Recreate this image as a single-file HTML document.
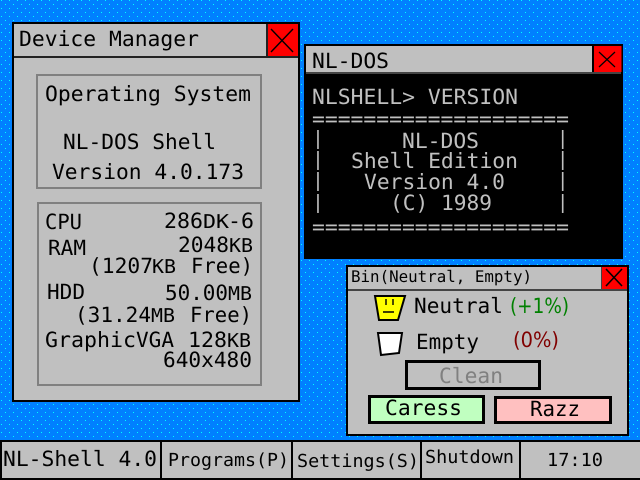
<!DOCTYPE html>
<html><head><meta charset="utf-8"><style>
html,body{margin:0;padding:0;width:640px;height:480px;overflow:hidden;background:#0080ff}
svg{display:block;position:absolute;left:0;top:0}
text{font-family:"DejaVu Sans Mono","Liberation Mono",monospace;font-size:21px;fill:#000;white-space:pre;text-rendering:geometricPrecision}
.g{fill:#c0c0c0}
.p{font-size:19px}
.s{font-family:"DejaVu Sans","Liberation Sans",sans-serif}
.u{font-size:19px}
</style></head><body>
<svg width="640" height="480" viewBox="0 0 640 480" xmlns="http://www.w3.org/2000/svg">
<defs><pattern id="d" width="8" height="8" patternUnits="userSpaceOnUse"><rect width="8" height="8" fill="#0080ff"/><rect x="1" y="0" width="1" height="1" fill="#00ffff"/><rect x="5" y="4" width="1" height="1" fill="#00ffff"/></pattern></defs>
<rect width="640" height="480" fill="url(#d)"/>

<!-- Device Manager -->
<rect x="12" y="22" width="288" height="380" fill="#000"/>
<rect x="14" y="24" width="284" height="376" fill="#c0c0c0"/>
<rect x="14" y="56" width="284" height="2" fill="#222"/>
<rect x="266" y="24" width="2" height="34" fill="#222"/>
<rect x="268" y="24" width="30" height="32" fill="#ff0000"/>
<path d="M271 29L293 52M293 29L271 52" stroke="#000" stroke-width="1.4" fill="none"/>
<text x="19" y="46" textLength="180" lengthAdjust="spacingAndGlyphs">Device Manager</text>
<rect x="37" y="75" width="224" height="113" fill="none" stroke="#808080" stroke-width="2"/>
<text x="45" y="101" textLength="206" lengthAdjust="spacingAndGlyphs">Operating System</text>
<text x="63" y="149" textLength="153" lengthAdjust="spacingAndGlyphs">NL-DOS Shell</text>
<text x="52" y="179" textLength="192" lengthAdjust="spacingAndGlyphs">Version 4.0.173</text>
<rect x="38" y="203" width="223" height="182" fill="none" stroke="#808080" stroke-width="2"/>
<text x="45" y="229" textLength="37" lengthAdjust="spacingAndGlyphs">CPU</text>
<text x="164" y="228" textLength="39" lengthAdjust="spacingAndGlyphs">286</text>
<text class="u" x="203" y="228" textLength="26" lengthAdjust="spacingAndGlyphs">DK</text>
<text x="228" y="228" textLength="26" lengthAdjust="spacingAndGlyphs">-6</text>
<text x="48" y="255" textLength="38" lengthAdjust="spacingAndGlyphs">RAM</text>
<text x="178" y="252" textLength="51" lengthAdjust="spacingAndGlyphs">2048</text>
<text class="u" x="229" y="252" textLength="24" lengthAdjust="spacingAndGlyphs">KB</text>
<text x="89" y="273" textLength="64" lengthAdjust="spacingAndGlyphs">(1207</text>
<text class="u" x="152" y="273" textLength="24" lengthAdjust="spacingAndGlyphs">KB</text>
<text x="191" y="273" textLength="62" lengthAdjust="spacingAndGlyphs">Free)</text>
<text x="47" y="299" textLength="38" lengthAdjust="spacingAndGlyphs">HDD</text>
<text x="165" y="300" textLength="63" lengthAdjust="spacingAndGlyphs">50.00</text>
<text class="u" x="228" y="300" textLength="24" lengthAdjust="spacingAndGlyphs">MB</text>
<text x="75" y="322" textLength="76" lengthAdjust="spacingAndGlyphs">(31.24</text>
<text class="u" x="151" y="322" textLength="24" lengthAdjust="spacingAndGlyphs">MB</text>
<text x="190" y="322" textLength="62" lengthAdjust="spacingAndGlyphs">Free)</text>
<text x="45" y="347" textLength="91" lengthAdjust="spacingAndGlyphs">Graphic</text>
<text x="136" y="347" textLength="38" lengthAdjust="spacingAndGlyphs">VGA</text>
<text x="188" y="347" textLength="39" lengthAdjust="spacingAndGlyphs">128</text>
<text class="u" x="227" y="347" textLength="24" lengthAdjust="spacingAndGlyphs">KB</text>
<text x="163" y="367" textLength="89" lengthAdjust="spacingAndGlyphs">640x480</text>

<!-- NL-DOS -->
<rect x="304" y="44" width="319" height="215" fill="#000"/>
<rect x="306" y="46" width="286" height="26" fill="#c0c0c0"/>
<rect x="306" y="72" width="315" height="2" fill="#444"/>
<rect x="594" y="46" width="27.5" height="26" fill="#ff0000"/>
<path d="M599 52L615 67M615 52L599 67" stroke="#000" stroke-width="1.2" fill="none"/>
<text x="312" y="68" textLength="77" lengthAdjust="spacingAndGlyphs">NL-DOS</text>
<text class="g" x="312" y="104" textLength="206" lengthAdjust="spacingAndGlyphs">NLSHELL&gt; VERSION</text>
<text class="g" x="312" y="126" textLength="257" lengthAdjust="spacingAndGlyphs">====================</text>
<text class="g" x="402" y="148" textLength="77" lengthAdjust="spacingAndGlyphs">NL-DOS</text>
<text class="g" x="351" y="168" textLength="167" lengthAdjust="spacingAndGlyphs">Shell Edition</text>
<text class="g" x="364" y="189" textLength="141" lengthAdjust="spacingAndGlyphs">Version 4.0</text>
<text class="g" x="390" y="210" textLength="102" lengthAdjust="spacingAndGlyphs">(C) 1989</text>
<text class="g" x="312" y="234" textLength="257" lengthAdjust="spacingAndGlyphs">====================</text>
<text class="g p" x="312.3" y="144.5">|</text>
<text class="g p" x="312.3" y="165.5">|</text>
<text class="g p" x="312.3" y="186.5">|</text>
<text class="g p" x="312.3" y="208.5">|</text>
<text class="g p" x="557" y="144.5">|</text>
<text class="g p" x="557" y="165.5">|</text>
<text class="g p" x="557" y="186.5">|</text>
<text class="g p" x="557" y="208.5">|</text>

<!-- Bin -->
<rect x="346" y="265" width="283" height="171" fill="#000"/>
<rect x="348" y="267" width="279" height="167" fill="#c0c0c0"/>
<rect x="348" y="289" width="279" height="2" fill="#444"/>
<rect x="601" y="267" width="1" height="23" fill="#444"/>
<rect x="602" y="267" width="25" height="22" fill="#ff0000"/>
<path d="M606 269L622 286M622 269L606 286" stroke="#000" stroke-width="1.6" fill="none"/>
<text x="351" y="282" style="font-size:16px" textLength="181" lengthAdjust="spacingAndGlyphs">Bin(Neutral, Empty)</text>
<path d="M375 296L405 296L398 320L379 320Z" fill="#ffff00" stroke="#000" stroke-width="2"/>
<path d="M386 299V305M393 299V305M383 312H394" stroke="#000" stroke-width="1.4" fill="none"/>
<path d="M378 333L402 333L399 353L381 355Z" fill="#fff" stroke="#000" stroke-width="2"/>
<text x="414" y="313" textLength="89" lengthAdjust="spacingAndGlyphs">Neutral</text>
<text class="s" x="510" y="313" style="fill:#008000" textLength="59" lengthAdjust="spacingAndGlyphs">(+1%)</text>
<text x="416" y="349" textLength="63" lengthAdjust="spacingAndGlyphs">Empty</text>
<text class="s" x="513" y="347" style="fill:#800000" textLength="46" lengthAdjust="spacingAndGlyphs">(0%)</text>
<rect x="406.5" y="361.5" width="133" height="27" fill="#c0c0c0" stroke="#000" stroke-width="3"/>
<text x="439" y="383" style="fill:#808080" textLength="64" lengthAdjust="spacingAndGlyphs">Clean</text>
<rect x="369.5" y="396.5" width="114" height="26" fill="#c0ffc0" stroke="#000" stroke-width="3"/>
<text x="385" y="415" textLength="77" lengthAdjust="spacingAndGlyphs">Caress</text>
<rect x="495.5" y="397.5" width="115" height="25" fill="#ffc0c0" stroke="#000" stroke-width="3"/>
<text x="530" y="416" textLength="50" lengthAdjust="spacingAndGlyphs">Razz</text>

<!-- Taskbar -->
<rect x="0" y="440" width="640" height="40" fill="#000"/>
<rect x="2" y="442" width="158" height="36" fill="#c0c0c0"/>
<rect x="162" y="442" width="129" height="36" fill="#c0c0c0"/>
<rect x="293" y="442" width="127" height="36" fill="#c0c0c0"/>
<rect x="422" y="442" width="97" height="36" fill="#c0c0c0"/>
<rect x="521" y="442" width="119" height="36" fill="#c0c0c0"/>
<text x="3" y="466" textLength="154" lengthAdjust="spacingAndGlyphs">NL-Shell 4.0</text>
<text x="168" y="466" style="font-size:18px" textLength="121" lengthAdjust="spacingAndGlyphs">Programs(P)</text>
<text x="297" y="467" style="font-size:18px" textLength="122" lengthAdjust="spacingAndGlyphs">Settings(S)</text>
<text x="425" y="463" style="font-size:18px" textLength="89" lengthAdjust="spacingAndGlyphs">Shutdown</text>
<text x="547" y="466" style="font-size:18px" textLength="56" lengthAdjust="spacingAndGlyphs">17:10</text>
</svg>
</body></html>
